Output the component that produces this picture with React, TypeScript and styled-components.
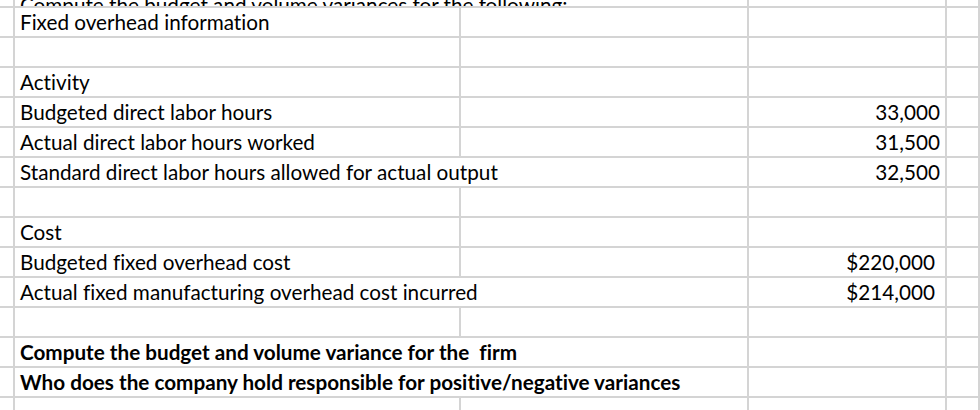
import React from "react";
import styled, { createGlobalStyle } from "styled-components";

const Global = createGlobalStyle`
  html, body { margin: 0; padding: 0; background: #ffffff; }
  body { width: 980px; height: 410px; overflow: hidden; }
`;

const Sheet = styled.div`
  display: grid;
  grid-template-columns: 15px 446px 288px 198px 1fr;
  grid-template-rows: 8px;
  grid-auto-rows: 30px;
  width: 980px;
  height: 410px;
  overflow: hidden;
  font-family: Lato, "Liberation Sans", sans-serif;
  font-size: 20.7px;
  font-variant-ligatures: none;
  color: #000000;
`;

const Cell = styled.div<{ $span?: number; $align?: "left" | "right"; $pad?: number; $bold?: boolean }>`
  box-sizing: border-box;
  grid-column: span ${(p) => p.$span ?? 1};
  border-right: 2px solid #d4d4d4;
  border-bottom: 2px solid #d4d4d4;
  display: flex;
  align-items: flex-end;
  justify-content: ${(p) => (p.$align === "right" ? "flex-end" : "flex-start")};
  padding: 0 ${(p) => p.$pad ?? 0}px 0 5px;
  line-height: 28px;
  font-weight: ${(p) => (p.$bold ? 700 : 400)};
  white-space: pre;
  overflow: hidden;
`;

const Clipped = styled.span`
  display: block;
  margin-bottom: -13px;
`;

type Row = {
  label?: string;
  value?: string;
  money?: boolean;
  span?: boolean;
  bold?: boolean;
};

const rows: Row[] = [
  { label: "Fixed overhead information" },
  {},
  { label: "Activity" },
  { label: "Budgeted direct labor hours", value: "33,000" },
  { label: "Actual direct labor hours worked", value: "31,500" },
  { label: "Standard direct labor hours allowed for actual output", value: "32,500", span: true },
  {},
  { label: "Cost" },
  { label: "Budgeted fixed overhead cost", value: "$220,000", money: true },
  { label: "Actual fixed manufacturing overhead cost incurred", value: "$214,000", money: true, span: true },
  {},
  { label: "Compute the budget and volume variance for the  firm", bold: true, span: true },
  { label: "Who does the company hold responsible for positive/negative variances", bold: true, span: true },
  {},
];

export default function App() {
  return (
    <>
      <Global />
      <Sheet>
        <Cell />
        <Cell $span={2}>
          <Clipped>Compute the budget and volume variances for the following:</Clipped>
        </Cell>
        <Cell />
        <Cell />
        {rows.map((r, i) => (
          <React.Fragment key={i}>
            <Cell />
            {r.span ? (
              <Cell $span={2} $bold={r.bold}>{r.label}</Cell>
            ) : (
              <>
                <Cell $bold={r.bold}>{r.label ?? ""}</Cell>
                <Cell />
              </>
            )}
            <Cell $align="right" $pad={r.money ? 10 : 5}>{r.value ?? ""}</Cell>
            <Cell />
          </React.Fragment>
        ))}
      </Sheet>
    </>
  );
}
